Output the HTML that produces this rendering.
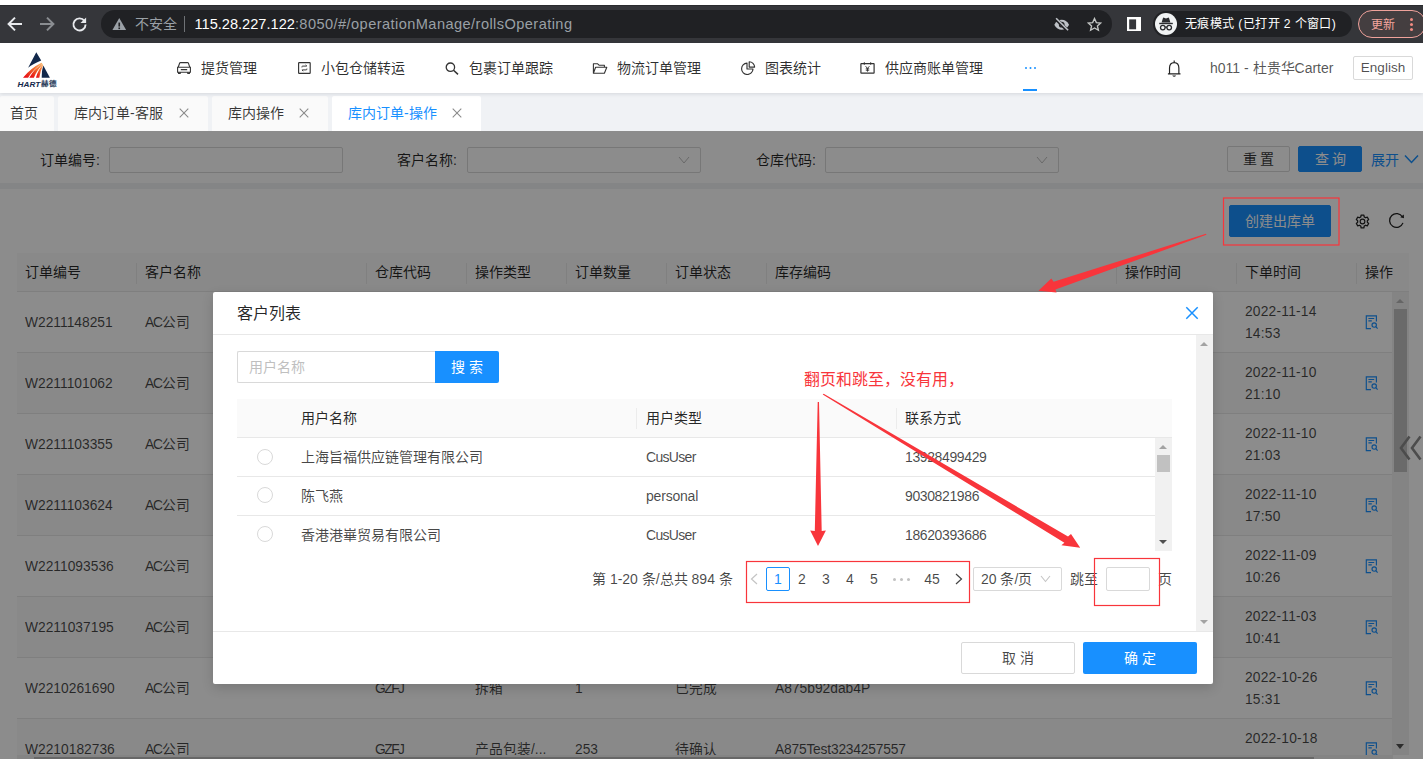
<!DOCTYPE html>
<html lang="zh-CN">
<head>
<meta charset="utf-8">
<title>rollsOperating</title>
<style>
*{box-sizing:border-box;margin:0;padding:0}
html,body{width:1423px;height:761px;overflow:hidden;background:#fff}
body{font-family:"Liberation Sans",sans-serif;font-size:14px;color:rgba(0,0,0,.65);position:relative}
.abs{position:absolute}
/* ---------- browser chrome ---------- */
#chrome{position:absolute;left:0;top:5px;width:1423px;height:38px;background:#35363a;border-top:1px solid #2a2b2e}
#pill{position:absolute;left:101px;top:4px;width:1011px;height:28px;border-radius:14px;background:#202124}
#chrome .t{position:absolute;white-space:nowrap;line-height:28px;top:4px;font-size:14px}
/* ---------- app header ---------- */
#hdr{position:absolute;left:0;top:43px;width:1423px;height:50px;background:#fff;box-shadow:0 1px 4px rgba(0,21,41,.12);z-index:3}
#hdr .m{position:absolute;top:0;line-height:50px;font-size:14px;color:rgba(0,0,0,.82);white-space:nowrap}
#hdr svg{position:absolute}
/* ---------- tabs ---------- */
#tabs{position:absolute;left:0;top:93px;width:1423px;height:38px;background:#f0f2f5}
.tab{position:absolute;top:3px;height:35px;background:#fafafa;line-height:35px;font-size:14px;color:rgba(0,0,0,.78);white-space:nowrap;border-radius:2px 2px 0 0}
.tab .x{position:absolute;top:0;font-size:12px;color:#8c8c8c}
/* ---------- page under mask ---------- */
#page{position:absolute;left:0;top:131px;width:1423px;height:628px;background:#f0f2f5;overflow:hidden}
#mask{position:absolute;left:0;top:131px;width:1423px;height:628px;background:rgba(0,0,0,.45);z-index:5}

/* page content */
#page .card{position:absolute;left:0;background:#fff;width:1423px}
#page .lbl{position:absolute;top:16px;line-height:27px;color:rgba(0,0,0,.85);font-size:14px;white-space:nowrap}
#page .inp{position:absolute;top:16px;height:26px;border:1px solid #d9d9d9;border-radius:2px;background:#fff}
#page .btn{position:absolute;height:26px;line-height:24px;text-align:center;font-size:14px;border-radius:2px;border:1px solid #d9d9d9;white-space:nowrap}
.th{position:absolute;top:0;line-height:39px;color:rgba(0,0,0,.85);font-size:14px;white-space:nowrap}
.sep{position:absolute;top:10px;width:1px;height:21px;background:#eaeaea}
.row{position:absolute;left:17px;width:1375px;height:61px;border-bottom:1px solid #e8e8e8}
.row.alt{background:#fafafa}
.row div{position:absolute;white-space:nowrap;font-size:13.800px;color:rgba(0,0,0,.72)}
.row .c{top:0;line-height:61px}
.row .d{left:1228px;top:9px;line-height:22px;letter-spacing:.2px}
/* ---------- modal ---------- */
#modal{position:absolute;left:213px;top:292px;width:1000px;height:392px;background:#fff;z-index:6;border-radius:2px;box-shadow:0 4px 12px rgba(0,0,0,.15)}

#modal .a{position:absolute;white-space:nowrap}
#modal .tx{position:absolute;white-space:nowrap;font-size:14px;color:rgba(0,0,0,.72);line-height:20px}
#modal .hl{position:absolute;height:1px;background:#e8e8e8}
#modal .pg{position:absolute;top:275px;width:24px;height:24px;line-height:24px;text-align:center;font-size:14px;color:rgba(0,0,0,.72)}
#anno{position:absolute;left:0;top:0;width:1423px;height:761px;z-index:9;pointer-events:none}
</style>
</head>
<body>
<div id="chrome">
<div id="pill"></div>
<!-- nav icons -->
<svg class="abs" style="left:6px;top:9px" width="18" height="18" viewBox="0 0 18 18"><path d="M16 9H3.2M9 2.6L2.6 9L9 15.4" fill="none" stroke="#e8eaed" stroke-width="2"/></svg>
<svg class="abs" style="left:38px;top:9px" width="18" height="18" viewBox="0 0 18 18"><path d="M2 9H14.8M9 2.6L15.4 9L9 15.4" fill="none" stroke="#8a8d91" stroke-width="2"/></svg>
<svg class="abs" style="left:70px;top:8.500px" width="19" height="19" viewBox="0 0 20 20"><path d="M15.2 6.2A6.4 6.4 0 1 0 16.4 10" fill="none" stroke="#e8eaed" stroke-width="2"/><path d="M17 2.5V8.5H11Z" fill="#e8eaed"/></svg>
<svg class="abs" style="left:111.700px;top:11.600px" width="14.500" height="12.800" viewBox="0 0 16 14"><path d="M8 0L16 14H0Z" fill="#9aa0a6"/><rect x="7.1" y="5" width="1.8" height="4.4" fill="#202124"/><rect x="7.1" y="10.4" width="1.8" height="1.8" fill="#202124"/></svg>
<div class="t" style="left:135px;color:#9aa0a6">不安全</div>
<div class="abs" style="left:184px;top:10px;width:1px;height:16px;background:#6f7276"></div>
<div class="t" style="left:194.500px;color:#9aa0a6;font-size:14.600px;letter-spacing:.43px"><span style="color:#fff;letter-spacing:0">115.28.227.122</span>:8050/#/operationManage/rollsOperating</div>
<!-- right icons -->
<svg class="abs" style="left:1053.300px;top:9.700px" width="17.400" height="17.400" viewBox="0 0 20 20"><path d="M1.5 10C3.5 6 6.5 4.3 10 4.3S16.5 6 18.5 10C16.5 14 13.5 15.7 10 15.7S3.500 14 1.5 10Z" fill="#bdc1c6"/><circle cx="10" cy="10" r="3.3" fill="#202124"/><circle cx="10" cy="10" r="1.7" fill="#bdc1c6"/><path d="M3 3L17 17" stroke="#202124" stroke-width="4"/><path d="M3.6 2.6L17.4 16.4" stroke="#bdc1c6" stroke-width="1.8"/></svg>
<svg class="abs" style="left:1086.500px;top:10.500px" width="15" height="15" viewBox="0 0 18 18"><path d="M9 1.8L11.2 6.7L16.5 7.2L12.5 10.7L13.7 15.9L9 13.1L4.3 15.9L5.5 10.700L1.5 7.2L6.8 6.7Z" fill="none" stroke="#c4c7c5" stroke-width="1.6" stroke-linejoin="miter"/></svg>
<svg class="abs" style="left:1127px;top:10.700px" width="14.200" height="14.700" viewBox="0 0 14.200 14.700"><rect x="0" y="0" width="14.200" height="14.700" fill="#fff"/><rect x="2.200" y="2.400" width="6.900" height="9.900" fill="#35363a"/></svg>
<div class="abs" style="left:1153px;top:5px;width:199px;height:26px;border-radius:13px;background:#202124"></div>
<svg class="abs" style="left:1155px;top:7px" width="22" height="22" viewBox="0 0 22 22"><circle cx="11" cy="11" r="11" fill="#f1f3f4"/><path d="M6.600 9.600L7.900 5.200Q8.200 4.400 9 4.700L11 5.400L13 4.700Q13.800 4.400 14.100 5.200L15.400 9.600Z" fill="#2a2b2f"/><rect x="4.200" y="9.800" width="13.600" height="1.400" fill="#2a2b2f"/><circle cx="7.800" cy="14.600" r="2.300" fill="none" stroke="#2a2b2f" stroke-width="1.300"/><circle cx="14.200" cy="14.600" r="2.300" fill="none" stroke="#2a2b2f" stroke-width="1.300"/><path d="M10 14.200H12" stroke="#2a2b2f" stroke-width="1.200"/></svg>
<div class="t" style="left:1185px;color:#fff;font-size:12.100px;letter-spacing:.4px">无痕模式 (已打开 2 个窗口)</div>
<div class="abs" style="left:1358px;top:4px;width:68px;height:28px;border-radius:14px;border:1.300px solid #f0a29b;background:#443e40"></div>
<div class="t" style="left:1371px;top:5px;color:#f4a59e;font-size:12px">更新</div>
<div class="abs" style="left:1410px;top:12px;width:3.200px;height:3.200px;border-radius:50%;background:#f28b82;box-shadow:0 5px 0 #f28b82,0 10px 0 #f28b82"></div>
</div>
<div id="hdr">
<svg style="left:10px;top:3px" width="56" height="46" viewBox="10 46 56 46">
<defs><linearGradient id="lg" x1="0" y1="1" x2="1" y2="0"><stop offset="0" stop-color="#e60012"/><stop offset=".55" stop-color="#f0642a"/><stop offset="1" stop-color="#f9b66a"/></linearGradient></defs>
<path d="M36.300 52.300L41.200 60.400Q33 63.500 28.100 67.800Z" fill="#12284b"/>
<path d="M43.300 65.600L49.900 77.700H41.700Q41.400 71 43.300 65.600Z" fill="#12284b"/>
<path d="M23 77.700Q31 68 41.500 62.800L42.300 63.800Q33.500 69 28.100 77.700Z" fill="url(#lg)"/>
<path d="M29.300 77.700Q34.500 68.500 42.300 63.800L42.800 64.600Q37 70 33.900 77.700Z" fill="url(#lg)"/>
<path d="M36 77.700Q38 70 42.800 64.600L43.100 65.400Q40 71 39.300 77.700Z" fill="url(#lg)"/>
<text x="17.600" y="86.600" font-family="Liberation Sans" font-weight="bold" font-style="italic" font-size="7.800" fill="#12284b" textLength="22.600" lengthAdjust="spacingAndGlyphs">HART</text>
<text x="41.400" y="86.300" font-family="Liberation Sans" font-weight="bold" font-size="6.300" fill="#2a3d5c" textLength="14.400" lengthAdjust="spacingAndGlyphs">赫德</text>
</svg>
<!-- menu 1 car -->
<svg style="left:177px;top:19px" width="14" height="12" viewBox="0 0 14 12"><path d="M1.200 5.200L2.600 1.200Q2.800 .6 3.500 .6H10.500Q11.200 .6 11.400 1.200L12.800 5.200M.6 5.200H13.400V10.200H.6ZM1.600 10.200V11.500H3.200V10.200M10.800 10.200V11.500H12.400V10.200M3.800 7.600H10.200" fill="none" stroke="#333" stroke-width="1.100"/></svg>
<div class="m" style="left:201px">提货管理</div>
<!-- menu 2 interaction -->
<svg style="left:298px;top:19px" width="13" height="12" viewBox="0 0 13 12"><rect x=".6" y=".6" width="11.600" height="10.800" rx=".6" fill="none" stroke="#333" stroke-width="1.150"/><path d="M3.900 5.400V4.900Q3.900 4.100 4.700 4.100H8.600M7.600 2.900L8.900 4.100M8.900 6.600V7.100Q8.900 7.900 8.100 7.900H4.200M5.200 9.100L3.900 7.900" fill="none" stroke="#333" stroke-width=".95"/></svg>
<div class="m" style="left:321px">小包仓储转运</div>
<!-- menu 3 search -->
<svg style="left:445px;top:19px" width="14" height="13" viewBox="0 0 14 13"><circle cx="5.400" cy="5.200" r="4.200" fill="none" stroke="#333" stroke-width="1.300"/><path d="M8.500 8.300L13 12.400" stroke="#333" stroke-width="1.500"/></svg>
<div class="m" style="left:469px">包裹订单跟踪</div>
<!-- menu 4 folder-open -->
<svg style="left:592px;top:20px" width="16" height="11" viewBox="0 0 16 11"><path d="M1.400 10.200V.7H5.400L7 2.200H12.400V4.200M1.400 10.200L3.600 4.200H14.800L12.400 10.200Z" fill="none" stroke="#333" stroke-width="1.100" stroke-linejoin="round"/></svg>
<div class="m" style="left:617px">物流订单管理</div>
<!-- menu 5 pie -->
<svg style="left:741px;top:18px" width="15" height="14" viewBox="0 0 15 14"><path d="M6 2.100A5.700 5.700 0 1 0 12 8H6Z" fill="none" stroke="#333" stroke-width="1.150" stroke-linejoin="round"/><path d="M8.200 .700A5.400 5.400 0 0 1 13.600 6.100H8.200Z" fill="none" stroke="#333" stroke-width="1.150" stroke-linejoin="round"/></svg>
<div class="m" style="left:765px">图表统计</div>
<!-- menu 6 account-book -->
<svg style="left:860px;top:19px" width="15" height="12" viewBox="0 0 15 12"><rect x=".9" y="1.700" width="13.200" height="9.500" rx=".4" fill="none" stroke="#333" stroke-width="1.200"/><path d="M4.300 .2V2.800M10.700 .2V2.800M5.600 4.200L7.500 6.400L9.400 4.200M7.500 6.400V9.600M5.800 6.800H9.200M5.800 8.200H9.200" fill="none" stroke="#333" stroke-width=".95"/></svg>
<div class="m" style="left:885px">供应商账单管理</div>
<div class="abs" style="left:1025px;top:24px;width:2px;height:2px;border-radius:50%;background:#1890ff;box-shadow:4.500px 0 0 #1890ff,9px 0 0 #1890ff"></div>
<div class="abs" style="left:1023px;top:46px;width:14px;height:2px;background:#1890ff"></div>
<!-- bell -->
<svg style="left:1167px;top:17px" width="14.400" height="18" viewBox="0 0 16 18" preserveAspectRatio="none"><path d="M8 .6V2.200M1 13.800H15M2.800 13.800V8Q2.800 2.600 8 2.600T13.200 8V13.800" fill="none" stroke="#222" stroke-width="1.300"/><path d="M5.800 15.400Q8 18.200 10.200 15.400Z" fill="#222"/></svg>
<div class="m" style="left:1210px;color:rgba(0,0,0,.68)">h011 - 杜贵华Carter</div>
<div class="abs" style="left:1353px;top:13px;width:60px;height:24px;border:1px solid #d9d9d9;border-radius:2px;line-height:22px;text-align:center;font-size:13.500px;color:rgba(0,0,0,.7)">English</div>
</div>
<div id="tabs">
<div class="tab" style="left:0;width:54px;padding-left:10px">首页</div>
<div class="tab" style="left:58px;width:150px;padding-left:16px">库内订单-客服<svg class="abs" style="left:121px;top:12px" width="10" height="10" viewBox="0 0 10 10"><path d="M.7.700L9.300 9.300M9.300.700L.7 9.300" stroke="#8a8a8a" stroke-width="1.050" fill="none"/></svg></div>
<div class="tab" style="left:212px;width:116px;padding-left:16px">库内操作<svg class="abs" style="left:87px;top:12px" width="10" height="10" viewBox="0 0 10 10"><path d="M.7.700L9.300 9.300M9.300.700L.7 9.300" stroke="#8a8a8a" stroke-width="1.050" fill="none"/></svg></div>
<div class="tab" style="left:332px;width:149px;padding-left:16px;background:#fff;color:#1890ff">库内订单-操作<svg class="abs" style="left:120px;top:12px" width="10" height="10" viewBox="0 0 10 10"><path d="M.7.700L9.300 9.300M9.300.700L.7 9.300" stroke="#8a8a8a" stroke-width="1.050" fill="none"/></svg></div>
</div>
<div id="page">
<div class="card" style="top:0;height:52px">
<div class="lbl" style="left:40px">订单编号:</div><div class="inp" style="left:109px;width:234px"></div>
<div class="lbl" style="left:397px">客户名称:</div><div class="inp" style="left:467px;width:234px"><svg class="abs" style="left:210px;top:7px" width="12" height="10" viewBox="0 0 12 10"><path d="M1 2L6 8L11 2" fill="none" stroke="#bfbfbf" stroke-width="1"/></svg></div>
<div class="lbl" style="left:756px">仓库代码:</div><div class="inp" style="left:825px;width:234px"><svg class="abs" style="left:210px;top:7px" width="12" height="10" viewBox="0 0 12 10"><path d="M1 2L6 8L11 2" fill="none" stroke="#bfbfbf" stroke-width="1"/></svg></div>
<div class="btn" style="left:1227px;top:15px;width:63px;color:rgba(0,0,0,.8);letter-spacing:3px;padding-left:3px">重置</div>
<div class="btn" style="left:1298px;top:15px;width:64px;background:#1890ff;border-color:#1890ff;color:#fff;letter-spacing:3px;padding-left:3px">查询</div>
<div class="lbl" style="left:1371px;color:#1890ff">展开</div>
<svg class="abs" style="left:1404px;top:23px" width="15" height="10" viewBox="0 0 15 10"><path d="M1 1.500L7.500 8.500L14 1.500" fill="none" stroke="#1890ff" stroke-width="1.500"/></svg>
</div>
<div class="card" style="top:58px;height:575px">
<div class="btn" style="left:1229px;top:16px;width:102px;height:32px;line-height:30px;background:#1890ff;border-color:#1890ff;color:#fff">创建出库单</div>
<svg class="abs" style="left:1354.500px;top:24.800px" width="15" height="15" viewBox="0 0 15 15"><path d="M5.82 2.90L6.10 1.20L8.90 1.20L9.18 2.90L10.65 3.75L12.26 3.14L13.65 5.56L12.33 6.65L12.33 8.35L13.65 9.44L12.26 11.86L10.65 11.25L9.18 12.10L8.90 13.80L6.10 13.80L5.82 12.10L4.35 11.25L2.74 11.86L1.35 9.44L2.67 8.35L2.67 6.65L1.35 5.56L2.74 3.14L4.35 3.75Z" fill="none" stroke="#222" stroke-width="1.250" stroke-linejoin="round"/><circle cx="7.500" cy="7.500" r="2.350" fill="none" stroke="#222" stroke-width="1.150"/></svg>
<svg class="abs" style="left:1388.400px;top:23px" width="17" height="17" viewBox="0 0 17 17"><path d="M14.48 5.05A6.9 6.9 0 1 0 14.98 10.86" fill="none" stroke="#222" stroke-width="1.250"/><path d="M15.78 2.45L15.98 6.15L12.28 5.35Z" fill="#222"/></svg>
</div>
<div class="abs" style="left:17px;top:122px;width:1392px;height:39px;background:#fafafa;border-bottom:1px solid #e8e8e8"><div class="th" style="left:8px">订单编号</div><div class="th" style="left:128px">客户名称</div><div class="th" style="left:358px">仓库代码</div><div class="th" style="left:458px">操作类型</div><div class="th" style="left:558px">订单数量</div><div class="th" style="left:658px">订单状态</div><div class="th" style="left:758px">库存编码</div><div class="th" style="left:1108px">操作时间</div><div class="th" style="left:1228px">下单时间</div><div class="th" style="left:1348px">操作</div><div class="sep" style="left:119px"></div><div class="sep" style="left:349px"></div><div class="sep" style="left:449px"></div><div class="sep" style="left:549px"></div><div class="sep" style="left:649px"></div><div class="sep" style="left:749px"></div><div class="sep" style="left:1099px"></div><div class="sep" style="left:1219px"></div><div class="sep" style="left:1339px"></div></div>
<div class="row" style="top:161px"><div class="c" style="left:8px">W2211148251</div><div class="c" style="left:128px"><span style="letter-spacing:-1.300px">AC</span>公司</div><div class="c" style="left:358px;letter-spacing:-1.500px">GZFJ</div><div class="c" style="left:458px">拆箱</div><div class="c" style="left:558px">1</div><div class="c" style="left:658px">已完成</div><div class="d">2022-11-14<br>14:53</div><svg class="abs" style="left:1348px;top:23px" width="14" height="15" viewBox="0 0 14 15"><path d="M11.400 6.600V.8H1.300V13.600H6M3.400 3.500H9.200M3.400 5.800H6.800" fill="none" stroke="#1890ff" stroke-width="1.150"/><circle cx="9.200" cy="10" r="2.200" fill="none" stroke="#1890ff" stroke-width="1.150"/><path d="M10.800 11.700L12.600 13.600" stroke="#1890ff" stroke-width="1.150"/></svg></div>
<div class="row alt" style="top:222px"><div class="c" style="left:8px">W2211101062</div><div class="c" style="left:128px"><span style="letter-spacing:-1.300px">AC</span>公司</div><div class="c" style="left:358px;letter-spacing:-1.500px">GZFJ</div><div class="c" style="left:458px">拆箱</div><div class="c" style="left:558px">1</div><div class="c" style="left:658px">已完成</div><div class="d">2022-11-10<br>21:10</div><svg class="abs" style="left:1348px;top:23px" width="14" height="15" viewBox="0 0 14 15"><path d="M11.400 6.600V.8H1.300V13.600H6M3.400 3.500H9.200M3.400 5.800H6.800" fill="none" stroke="#1890ff" stroke-width="1.150"/><circle cx="9.200" cy="10" r="2.200" fill="none" stroke="#1890ff" stroke-width="1.150"/><path d="M10.800 11.700L12.600 13.600" stroke="#1890ff" stroke-width="1.150"/></svg></div>
<div class="row" style="top:283px"><div class="c" style="left:8px">W2211103355</div><div class="c" style="left:128px"><span style="letter-spacing:-1.300px">AC</span>公司</div><div class="c" style="left:358px;letter-spacing:-1.500px">GZFJ</div><div class="c" style="left:458px">拆箱</div><div class="c" style="left:558px">1</div><div class="c" style="left:658px">已完成</div><div class="d">2022-11-10<br>21:03</div><svg class="abs" style="left:1348px;top:23px" width="14" height="15" viewBox="0 0 14 15"><path d="M11.400 6.600V.8H1.300V13.600H6M3.400 3.500H9.200M3.400 5.800H6.800" fill="none" stroke="#1890ff" stroke-width="1.150"/><circle cx="9.200" cy="10" r="2.200" fill="none" stroke="#1890ff" stroke-width="1.150"/><path d="M10.800 11.700L12.600 13.600" stroke="#1890ff" stroke-width="1.150"/></svg></div>
<div class="row alt" style="top:344px"><div class="c" style="left:8px">W2211103624</div><div class="c" style="left:128px"><span style="letter-spacing:-1.300px">AC</span>公司</div><div class="c" style="left:358px;letter-spacing:-1.500px">GZFJ</div><div class="c" style="left:458px">拆箱</div><div class="c" style="left:558px">1</div><div class="c" style="left:658px">已完成</div><div class="d">2022-11-10<br>17:50</div><svg class="abs" style="left:1348px;top:23px" width="14" height="15" viewBox="0 0 14 15"><path d="M11.400 6.600V.8H1.300V13.600H6M3.400 3.500H9.200M3.400 5.800H6.800" fill="none" stroke="#1890ff" stroke-width="1.150"/><circle cx="9.200" cy="10" r="2.200" fill="none" stroke="#1890ff" stroke-width="1.150"/><path d="M10.800 11.700L12.600 13.600" stroke="#1890ff" stroke-width="1.150"/></svg></div>
<div class="row" style="top:405px"><div class="c" style="left:8px">W2211093536</div><div class="c" style="left:128px"><span style="letter-spacing:-1.300px">AC</span>公司</div><div class="c" style="left:358px;letter-spacing:-1.500px">GZFJ</div><div class="c" style="left:458px">拆箱</div><div class="c" style="left:558px">1</div><div class="c" style="left:658px">已完成</div><div class="d">2022-11-09<br>10:26</div><svg class="abs" style="left:1348px;top:23px" width="14" height="15" viewBox="0 0 14 15"><path d="M11.400 6.600V.8H1.300V13.600H6M3.400 3.500H9.200M3.400 5.800H6.800" fill="none" stroke="#1890ff" stroke-width="1.150"/><circle cx="9.200" cy="10" r="2.200" fill="none" stroke="#1890ff" stroke-width="1.150"/><path d="M10.800 11.700L12.600 13.600" stroke="#1890ff" stroke-width="1.150"/></svg></div>
<div class="row alt" style="top:466px"><div class="c" style="left:8px">W2211037195</div><div class="c" style="left:128px"><span style="letter-spacing:-1.300px">AC</span>公司</div><div class="c" style="left:358px;letter-spacing:-1.500px">GZFJ</div><div class="c" style="left:458px">拆箱</div><div class="c" style="left:558px">1</div><div class="c" style="left:658px">已完成</div><div class="d">2022-11-03<br>10:41</div><svg class="abs" style="left:1348px;top:23px" width="14" height="15" viewBox="0 0 14 15"><path d="M11.400 6.600V.8H1.300V13.600H6M3.400 3.500H9.200M3.400 5.800H6.800" fill="none" stroke="#1890ff" stroke-width="1.150"/><circle cx="9.200" cy="10" r="2.200" fill="none" stroke="#1890ff" stroke-width="1.150"/><path d="M10.800 11.700L12.600 13.600" stroke="#1890ff" stroke-width="1.150"/></svg></div>
<div class="row" style="top:527px"><div class="c" style="left:8px">W2210261690</div><div class="c" style="left:128px"><span style="letter-spacing:-1.300px">AC</span>公司</div><div class="c" style="left:358px;letter-spacing:-1.500px">GZFJ</div><div class="c" style="left:458px">拆箱</div><div class="c" style="left:558px">1</div><div class="c" style="left:658px">已完成</div><div class="c" style="left:758px">A875b92dab4P</div><div class="d">2022-10-26<br>15:31</div><svg class="abs" style="left:1348px;top:23px" width="14" height="15" viewBox="0 0 14 15"><path d="M11.400 6.600V.8H1.300V13.600H6M3.400 3.500H9.200M3.400 5.800H6.800" fill="none" stroke="#1890ff" stroke-width="1.150"/><circle cx="9.200" cy="10" r="2.200" fill="none" stroke="#1890ff" stroke-width="1.150"/><path d="M10.800 11.700L12.600 13.600" stroke="#1890ff" stroke-width="1.150"/></svg></div>
<div class="row alt" style="top:588px"><div class="c" style="left:8px">W2210182736</div><div class="c" style="left:128px"><span style="letter-spacing:-1.300px">AC</span>公司</div><div class="c" style="left:358px;letter-spacing:-1.500px">GZFJ</div><div class="c" style="left:458px">产品包装/...</div><div class="c" style="left:558px">253</div><div class="c" style="left:658px">待确认</div><div class="c" style="left:758px;letter-spacing:-.2px">A875Test3234257557</div><div class="d">2022-10-18<br>14:20</div><svg class="abs" style="left:1348px;top:23px" width="14" height="15" viewBox="0 0 14 15"><path d="M11.400 6.600V.8H1.300V13.600H6M3.400 3.500H9.200M3.400 5.800H6.800" fill="none" stroke="#1890ff" stroke-width="1.150"/><circle cx="9.200" cy="10" r="2.200" fill="none" stroke="#1890ff" stroke-width="1.150"/><path d="M10.800 11.700L12.600 13.600" stroke="#1890ff" stroke-width="1.150"/></svg></div>

<!-- table vertical scrollbar -->
<div class="abs" style="left:1392px;top:161px;width:17px;height:463px;background:#f1f1f1"></div>
<div class="abs" style="left:1394px;top:178px;width:13px;height:163px;background:#c1c1c1"></div>
<div class="abs" style="left:1396px;top:168px;border:4px solid transparent;border-top:0;border-bottom:4.500px solid #b8b8b8;width:0;height:0"></div>
<div class="abs" style="left:1396px;top:613px;border:4px solid transparent;border-bottom:0;border-top:5px solid #505050;width:0;height:0"></div>
<!-- horizontal scrollbar -->
<div class="abs" style="left:17px;top:624px;width:1376px;height:4px;background:#f1f1f1"></div>
<div class="abs" style="left:34px;top:626px;width:1280px;height:2px;background:#bcbcbc"></div>
<!-- collapse handle -->
<svg class="abs" style="left:1398px;top:303px" width="25" height="28" viewBox="0 0 25 28"><path d="M11.500 2.500L3 14L11.500 25.500M22.500 2.500L14 14L22.500 25.500" fill="none" stroke="#8a8a8a" stroke-width="2.600"/></svg>
</div>
<div id="mask"></div>
<div id="modal">
<div class="a" style="left:24px;top:10px;font-size:16px;line-height:24px;color:rgba(0,0,0,.85)">客户列表</div>
<svg class="a" style="left:972px;top:14px" width="14" height="14" viewBox="0 0 14 14"><path d="M1.300 1.300L12.700 12.700M12.700 1.300L1.300 12.700" stroke="#1890ff" stroke-width="1.500" fill="none"/></svg>
<div class="hl" style="left:0;top:42px;width:1000px"></div>
<!-- body scrollbar -->
<div class="a" style="left:983px;top:43px;width:17px;height:296px;background:#f1f1f1"></div>
<div class="a" style="left:987px;top:50px;width:0;height:0;border:4.500px solid transparent;border-top:0;border-bottom:4.500px solid #a3a3a3"></div>
<div class="a" style="left:987px;top:328px;width:0;height:0;border:4.500px solid transparent;border-bottom:0;border-top:4.500px solid #a3a3a3"></div>
<!-- search -->
<div class="a" style="left:24px;top:59px;width:199px;height:32px;border:1px solid #d9d9d9;border-right:0;border-radius:2px 0 0 2px;padding-left:11px;line-height:30px;font-size:14px;color:#bfbfbf">用户名称</div>
<div class="a" style="left:222px;top:59px;width:64px;height:32px;background:#1890ff;border-radius:0 2px 2px 0;color:#fff;font-size:14px;line-height:32px;text-align:center;letter-spacing:4px;padding-left:4px">搜索</div>
<!-- table -->
<div class="a" style="left:24px;top:107px;width:935px;height:38px;background:#fafafa"></div>
<div class="hl" style="left:24px;top:145px;width:935px"></div>
<div class="hl" style="left:24px;top:184px;width:918px"></div>
<div class="hl" style="left:24px;top:223px;width:918px"></div>
<div class="a" style="left:423px;top:116px;width:1px;height:21px;background:#ececec"></div>
<div class="a" style="left:683px;top:116px;width:1px;height:21px;background:#ececec"></div>
<div class="tx" style="left:88px;top:116px;color:rgba(0,0,0,.85)">用户名称</div>
<div class="tx" style="left:433px;top:116px;color:rgba(0,0,0,.85)">用户类型</div>
<div class="tx" style="left:692px;top:116px;color:rgba(0,0,0,.85)">联系方式</div>
<div class="a" style="left:44px;top:157px;width:16px;height:16px;border-radius:50%;border:1px solid #d9d9d9;background:#fff"></div><div class="a" style="left:44px;top:195px;width:16px;height:16px;border-radius:50%;border:1px solid #d9d9d9;background:#fff"></div><div class="a" style="left:44px;top:234px;width:16px;height:16px;border-radius:50%;border:1px solid #d9d9d9;background:#fff"></div>
<div class="tx" style="left:88px;top:155px">上海旨福供应链管理有限公司</div>
<div class="tx" style="left:88px;top:194px">陈飞燕</div>
<div class="tx" style="left:88px;top:233px">香港港崋贸易有限公司</div>
<div class="tx" style="left:433px;top:155px;letter-spacing:-.68px">CusUser</div>
<div class="tx" style="left:433px;top:194px;letter-spacing:-.2px">personal</div>
<div class="tx" style="left:433px;top:233px;letter-spacing:-.68px">CusUser</div>
<div class="tx" style="left:692px;top:155px;letter-spacing:-.38px">13928499429</div>
<div class="tx" style="left:692px;top:194px;letter-spacing:-.38px">9030821986</div>
<div class="tx" style="left:692px;top:233px;letter-spacing:-.38px">18620393686</div>
<!-- inner scrollbar -->
<div class="a" style="left:942px;top:146px;width:17px;height:113px;background:#f1f1f1"></div>
<div class="a" style="left:944px;top:163px;width:13px;height:17px;background:#c1c1c1"></div>
<div class="a" style="left:946px;top:153px;width:0;height:0;border:4.500px solid transparent;border-top:0;border-bottom:4.500px solid #a3a3a3"></div>
<div class="a" style="left:946px;top:248px;width:0;height:0;border:4.500px solid transparent;border-bottom:0;border-top:4.500px solid #505050"></div>
<!-- pagination -->
<div class="tx" style="left:379px;top:277px">第 1-20 条/总共 894 条</div>
<svg class="a" style="left:537px;top:281px" width="8" height="12" viewBox="0 0 8 12"><path d="M7 1L1.500 6L7 11" fill="none" stroke="#c4c4c4" stroke-width="1.200"/></svg>
<div class="pg" style="left:553px;border:1px solid #1890ff;border-radius:2px;line-height:22px;color:#1890ff">1</div>
<div class="pg" style="left:577px">2</div>
<div class="pg" style="left:601px">3</div>
<div class="pg" style="left:625px">4</div>
<div class="pg" style="left:649px">5</div>
<div class="a" style="left:680px;top:285.800px;width:3.200px;height:3.200px;border-radius:50%;background:#c2c2c2;box-shadow:7px 0 0 #c2c2c2,14px 0 0 #c2c2c2"></div>
<div class="pg" style="left:707px">45</div>
<svg class="a" style="left:742px;top:281px" width="8" height="12" viewBox="0 0 8 12"><path d="M1 1L6.500 6L1 11" fill="none" stroke="#444" stroke-width="1.200"/></svg>
<div class="a" style="left:760px;top:275px;width:89px;height:24px;border:1px solid #d9d9d9;border-radius:2px"></div>
<div class="tx" style="left:768px;top:277px">20 条/页</div>
<svg class="a" style="left:827px;top:283px" width="11" height="8" viewBox="0 0 11 8"><path d="M1 1L5.500 6.500L10 1" fill="none" stroke="#c4c4c4" stroke-width="1.100"/></svg>
<div class="tx" style="left:857px;top:277px">跳至</div>
<div class="a" style="left:893px;top:275px;width:44px;height:24px;border:1px solid #d9d9d9;border-radius:2px"></div>
<div class="tx" style="left:945px;top:277px">页</div>
<!-- footer -->
<div class="hl" style="left:0;top:339px;width:1000px"></div>
<div class="a" style="left:748px;top:350px;width:114px;height:32px;border:1px solid #d9d9d9;border-radius:2px;text-align:center;line-height:30px;font-size:14px;color:rgba(0,0,0,.72);letter-spacing:4px;padding-left:4px">取消</div>
<div class="a" style="left:870px;top:350px;width:114px;height:32px;background:#1890ff;border-radius:2px;text-align:center;line-height:32px;font-size:14px;color:#fff;letter-spacing:4px;padding-left:4px">确定</div>
</div>
<svg id="anno" viewBox="0 0 1423 761">
<g fill="none" stroke="#f8353b" stroke-width="1.200">
<rect x="1223.500" y="198" width="115.500" height="47"/>
<rect x="746.500" y="561.500" width="223" height="41"/>
<rect x="1094.500" y="558.500" width="65" height="47"/>
</g>
<text x="804" y="385" font-family="Liberation Sans, sans-serif" font-size="15.900" fill="#f8353b" xml:lang="zh-CN" lang="zh-CN">翻页和跳至，没有用，</text>
<g fill="#f8353b">
<path d="M1206.400 234.800L1206 233.800L1053.600 281.800L1051.300 278.400L1038.400 290.700L1056.600 292.600L1055.400 289.600Z"/>
<path d="M817.700 402L819 402L821.700 531L825.900 530.400L818 546L810.200 530.400L814.800 531Z"/>
<path d="M822.700 394.600L823.700 393.700L1068 536.600L1071 534L1080.200 547.800L1061.400 545.300L1064.400 542.700Z"/>
</g>
</svg>
</body>
</html>
